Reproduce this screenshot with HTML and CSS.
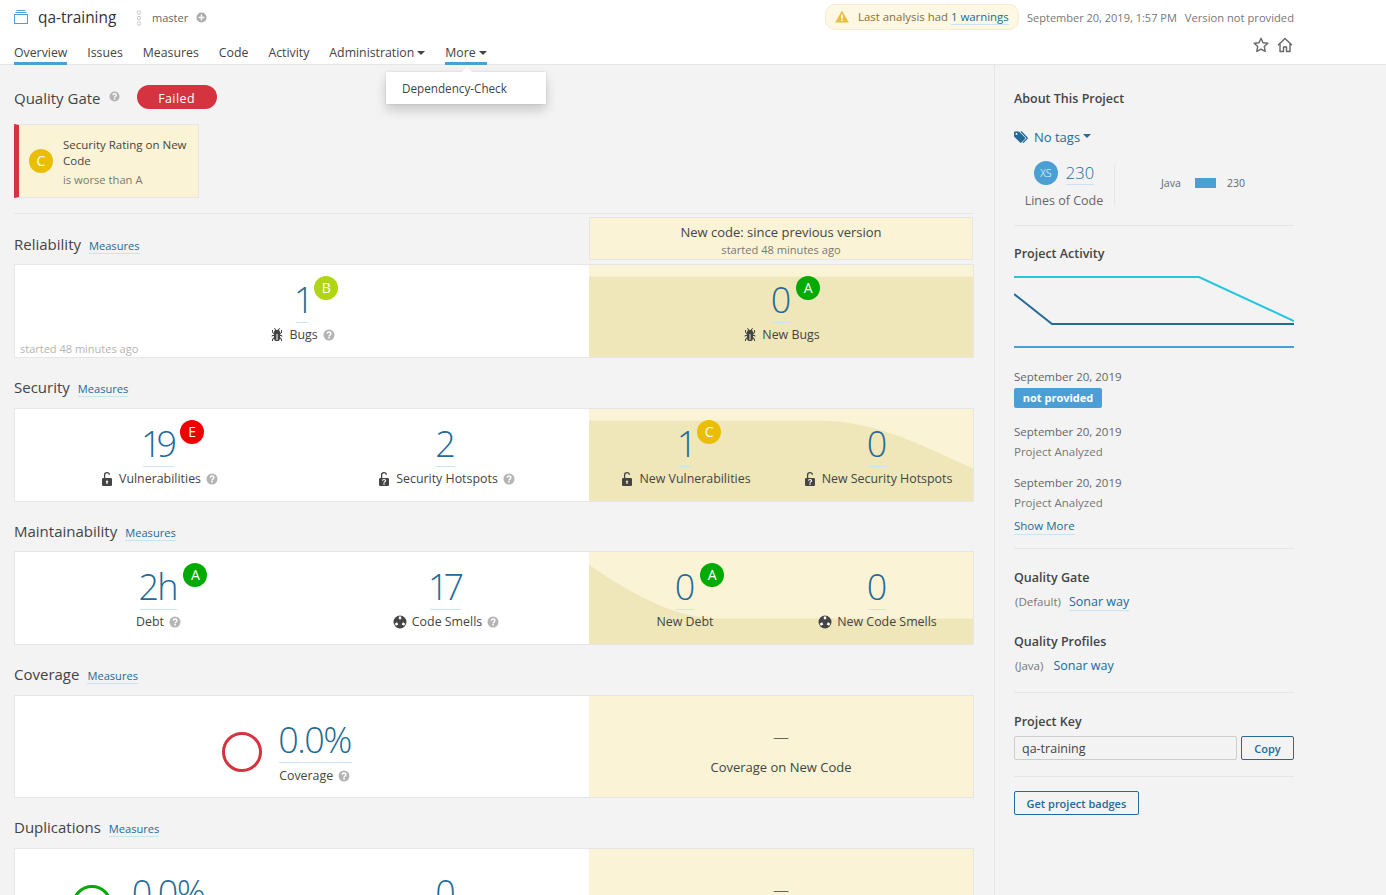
FILE: index.html
```html
<!DOCTYPE html>
<html lang="en">
<head>
<meta charset="utf-8">
<title>qa-training</title>
<link rel="stylesheet" href="styles.css">
</head>
<body>
<svg class="sprite" xmlns="http://www.w3.org/2000/svg">
  <symbol id="i-help" viewBox="0 0 12 12"><circle cx="6" cy="6" r="5.5" fill="#b4b4b4"/><path d="M4.2 4.7C4.3 3.6 5 3 6 3c1.1 0 1.9.7 1.9 1.6 0 1.5-1.9 1.4-1.9 2.8" fill="none" stroke="#fff" stroke-width="1.4"/><rect x="5.2" y="8" width="1.6" height="1.5" fill="#fff"/></symbol>
  <symbol id="i-bug" viewBox="0 0 16 16"><path fill="#444" fill-rule="evenodd" d="M11 9h1.300l.5.8.8-.5-.8-1.300H11v-.3l2-2.300V3h-1v2l-1 1.200V5c-.1-.8-.7-1.500-1.400-1.900L11 1.800l-.7-.7-1.800 1.800h-1L5.700 1.100 5 1.800l1.400 1.300C5.700 3.500 5.100 4.200 5 5v1.200L4 5V3H3v2.300l2 2.300V8H3.200l-.8 1.300.8.5.5-.8H5v1l-2 2.300V14h1v-1.300l1-1.200c0 1.100.9 2.500 2 2.500h2c1.100 0 2-1.400 2-2.500l1 1.200V14h1v-1.700L11 10V9zM7.500 7h1v6h-1V7z"/></symbol>
  <symbol id="i-lock" viewBox="0 0 16 16"><path fill="none" stroke="#444" stroke-width="1.300" d="M5.600 7V3.900C5.600 2.600 6.700 1.700 8 1.700s2.300.8 2.400 2"/><path fill="#444" fill-rule="evenodd" d="M4.300 7h7.400c.7 0 1.300.6 1.300 1.300v5.400c0 .7-.6 1.300-1.300 1.300H4.300C3.600 15 3 14.400 3 13.700V8.300C3 7.600 3.600 7 4.300 7zM8 9.400a1.200 1.200 0 0 0-.6 2.200V13h1.200v-1.400A1.200 1.200 0 0 0 8 9.400z"/></symbol>
  <symbol id="i-hotspot" viewBox="0 0 16 16"><path fill="none" stroke="#444" stroke-width="1.300" d="M5.600 7V3.900C5.600 2.600 6.700 1.700 8 1.700s2.300.8 2.400 2"/><path fill="#444" d="M4.300 7h7.400c.7 0 1.300.6 1.300 1.300v5.400c0 .7-.6 1.300-1.300 1.300H4.300C3.600 15 3 14.400 3 13.700V8.300C3 7.600 3.600 7 4.300 7z"/><path fill="none" stroke="#fff" stroke-width="1.200" d="M6.400 9.600C6.500 8.900 7.100 8.500 8 8.500c.9 0 1.600.5 1.600 1.200 0 1.100-1.600 1-1.600 2.100"/><rect x="7.300" y="12.400" width="1.400" height="1.300" fill="#fff"/></symbol>
  <symbol id="i-smell" viewBox="0 0 16 16"><circle cx="8" cy="8" r="6.500" fill="#444"/><path d="M8 5.300V2.600M10.300 9.400l2.400 1.400M5.700 9.400l-2.400 1.400" stroke="#fff" stroke-width="2.400" fill="none"/><circle cx="8" cy="8" r="1.300" fill="#444"/></symbol>
</svg>

<div class="page">
  <header class="topbar">
    <div class="topbar-row">
      <div class="project">
        <svg class="project-icon" viewBox="0 0 14 14"><path d="M2.500 .5h9M1.500 2.500h11" stroke="#4b9fd5" fill="none"/><rect x=".5" y="4.500" width="13" height="9" fill="none" stroke="#4b9fd5"/></svg>
        <span class="project-name">qa-training</span>
        <svg class="branch-icon" viewBox="0 0 8 16"><g fill="none" stroke="#c8c8c8" stroke-width="1"><circle cx="4" cy="2.500" r="1.700"/><circle cx="4" cy="8" r="1.700"/><circle cx="4" cy="13.500" r="1.700"/></g></svg>
        <span class="branch-name">master</span>
        <svg class="plus-icon" viewBox="0 0 12 12"><circle cx="6" cy="6" r="5.500" fill="#aaa"/><path d="M6 2.800v6.400M2.800 6h6.400" stroke="#fff" stroke-width="1.600"/></svg>
      </div>
      <div class="meta">
        <div class="warn-pill">
          <svg class="warn-icon" viewBox="0 0 14 13"><path d="M7 .5L13.800 12.500H.2z" fill="#eabe42"/><path d="M7 4.500v4M7 9.500v1.500" stroke="#fff" stroke-width="1.600"/></svg>
          <span class="warn-text">Last analysis had <a class="link">1 warnings</a></span>
        </div>
        <span class="meta-text">September 20, 2019, 1:57 PM</span>
        <span class="meta-text version-text">Version not provided</span>
      </div>
    </div>
    <div class="topbar-row nav-row">
      <nav class="nav">
        <a class="nav-item active">Overview</a>
        <a class="nav-item">Issues</a>
        <a class="nav-item">Measures</a>
        <a class="nav-item">Code</a>
        <a class="nav-item">Activity</a>
        <a class="nav-item">Administration<i class="caret"></i></a>
        <a class="nav-item active">More<i class="caret"></i></a>
      </nav>
      <div class="actions">
        <svg class="action-icon" viewBox="0 0 16 16"><path d="M8 1.300l2 4.400 4.800.6-3.500 3.300.9 4.800L8 12.100l-4.200 2.300.9-4.800L1.200 6.300 6 5.700z" fill="none" stroke="#666" stroke-width="1.400" stroke-linejoin="round"/></svg>
        <svg class="action-icon" viewBox="0 0 16 16"><path d="M1 8.300L8 1.500l7 6.800M3 7v7.500h3.500V10h3v4.500H13V7" fill="none" stroke="#666" stroke-width="1.400" stroke-linejoin="round"/></svg>
      </div>
    </div>
    <div class="menu"><span class="menu-item">Dependency-Check</span></div>
  </header>

  <div class="main">
    <div class="content">
      <div class="gate-row">
        <h2 class="title">Quality Gate</h2>
        <svg class="help help-gate"><use href="#i-help"/></svg>
        <span class="failed">Failed</span>
      </div>
      <div class="condition">
        <span class="rating r-c cond-rating">C</span>
        <div class="cond-text">
          <div>Security Rating on New Code</div>
          <div class="cond-sub">is worse than A</div>
        </div>
      </div>
      <div class="rule"></div>

      <div class="section-head first">
        <div class="head-title"><h3 class="title">Reliability</h3><a class="link small">Measures</a></div>
        <div class="new-code">
          <div>New code: since previous version</div>
          <div class="new-code-sub">started 48 minutes ago</div>
        </div>
      </div>
      <div class="card">
        <div class="pane">
          <div class="measure">
            <div class="value-wrap"><span class="value solo">1</span><span class="rating r-b over">B</span></div>
            <div class="label"><svg class="type"><use href="#i-bug"/></svg>Bugs<svg class="help"><use href="#i-help"/></svg></div>
          </div>
          <span class="started">started 48 minutes ago</span>
        </div>
        <div class="pane leak">
          <svg class="leak-bg" viewBox="0 0 384 94" preserveAspectRatio="none"><path d="M0 12H384V94H0z"/></svg>
          <div class="measure">
            <div class="value-wrap"><span class="value">0</span><span class="rating r-a over">A</span></div>
            <div class="label"><svg class="type"><use href="#i-bug"/></svg>New Bugs</div>
          </div>
        </div>
      </div>

      <div class="section-head">
        <div class="head-title"><h3 class="title">Security</h3><a class="link small">Measures</a></div>
      </div>
      <div class="card">
        <div class="pane">
          <div class="measure">
            <div class="value-wrap"><span class="value narrow">19</span><span class="rating r-e over">E</span></div>
            <div class="label"><svg class="type"><use href="#i-lock"/></svg>Vulnerabilities<svg class="help"><use href="#i-help"/></svg></div>
          </div>
          <div class="measure">
            <div class="value-wrap"><span class="value">2</span></div>
            <div class="label"><svg class="type"><use href="#i-hotspot"/></svg>Security Hotspots<svg class="help"><use href="#i-help"/></svg></div>
          </div>
        </div>
        <div class="pane leak">
          <svg class="leak-bg" viewBox="0 0 384 94" preserveAspectRatio="none"><path d="M0 12H230C280 12 320 30 384 61V94H0z"/></svg>
          <div class="measure">
            <div class="value-wrap"><span class="value solo">1</span><span class="rating r-c over">C</span></div>
            <div class="label"><svg class="type"><use href="#i-lock"/></svg>New Vulnerabilities</div>
          </div>
          <div class="measure">
            <div class="value-wrap"><span class="value">0</span></div>
            <div class="label"><svg class="type"><use href="#i-hotspot"/></svg>New Security Hotspots</div>
          </div>
        </div>
      </div>

      <div class="section-head">
        <div class="head-title"><h3 class="title">Maintainability</h3><a class="link small">Measures</a></div>
      </div>
      <div class="card">
        <div class="pane">
          <div class="measure">
            <div class="value-wrap"><span class="value">2h</span><span class="rating r-a over">A</span></div>
            <div class="label">Debt<svg class="help"><use href="#i-help"/></svg></div>
          </div>
          <div class="measure">
            <div class="value-wrap"><span class="value narrow">17</span></div>
            <div class="label"><svg class="type"><use href="#i-smell"/></svg>Code Smells<svg class="help"><use href="#i-help"/></svg></div>
          </div>
        </div>
        <div class="pane leak">
          <svg class="leak-bg" viewBox="0 0 384 94" preserveAspectRatio="none"><path d="M0 13C50 48 90 68 130 68H384V94H0z"/></svg>
          <div class="measure">
            <div class="value-wrap"><span class="value">0</span><span class="rating r-a over">A</span></div>
            <div class="label">New Debt</div>
          </div>
          <div class="measure">
            <div class="value-wrap"><span class="value">0</span></div>
            <div class="label"><svg class="type"><use href="#i-smell"/></svg>New Code Smells</div>
          </div>
        </div>
      </div>

      <div class="section-head">
        <div class="head-title"><h3 class="title">Coverage</h3><a class="link small">Measures</a></div>
      </div>
      <div class="card tall">
        <div class="pane">
          <div class="measure-wide">
            <svg class="donut"><circle cx="20" cy="20" r="18.500" fill="none" stroke="#d4333f" stroke-width="3"/></svg>
            <div class="wide-text">
              <span class="value">0.0%</span>
              <div class="label">Coverage<svg class="help"><use href="#i-help"/></svg></div>
            </div>
          </div>
        </div>
        <div class="pane leak">
          <div class="measure-empty">
            <div class="dash">—</div>
            <div class="label">Coverage on New Code</div>
          </div>
        </div>
      </div>

      <div class="section-head">
        <div class="head-title"><h3 class="title">Duplications</h3><a class="link small">Measures</a></div>
      </div>
      <div class="card tall">
        <div class="pane">
          <div class="measure-wide half">
            <svg class="donut"><circle cx="20" cy="20" r="18.500" fill="none" stroke="#00aa00" stroke-width="3"/></svg>
            <div class="wide-text">
              <span class="value">0.0%</span>
            </div>
          </div>
          <div class="measure low">
            <div class="value-wrap"><span class="value">0</span></div>
          </div>
        </div>
        <div class="pane leak">
          <div class="measure-empty">
            <div class="dash">—</div>
          </div>
        </div>
      </div>
    </div>

    <aside class="side">
      <section class="side-block about">
        <h4 class="side-title">About This Project</h4>
        <div class="tags">
          <svg class="tag-icon" viewBox="0 0 15 12"><path d="M0 1v4.500L6 11.500a1 1 0 0 0 1.400 0L11 8a1 1 0 0 0 0-1.400L5 .5H.6zM2.500 2a1 1 0 1 1 0 2 1 1 0 0 1 0-2z" fill="#236a97" fill-rule="evenodd"/><path d="M7 .5l5.800 6a1 1 0 0 1 0 1.400L9 11.700" fill="none" stroke="#236a97" stroke-width="1.300"/></svg>
          <span>No tags</span><i class="caret blue"></i>
        </div>
        <div class="size-row">
          <div class="size">
            <div class="size-top"><span class="size-badge">XS</span><span class="size-num">230</span></div>
            <div class="size-label">Lines of Code</div>
          </div>
          <div class="lang">
            <span class="lang-name">Java</span><span class="lang-bar"></span><span class="lang-num">230</span>
          </div>
        </div>
      </section>

      <section class="side-block activity">
        <h4 class="side-title">Project Activity</h4>
        <svg class="spark" viewBox="0 0 280 80" preserveAspectRatio="none">
          <path d="M0 7H185L280 51" stroke="#24c6e0"/>
          <path d="M0 24L38 54H280" stroke="#236a97"/>
          <path d="M0 77H280" stroke="#4b9fd5"/>
        </svg>
        <div class="event first-event">
          <div class="event-date">September 20, 2019</div>
          <span class="version">not provided</span>
        </div>
        <div class="event">
          <div class="event-date">September 20, 2019</div>
          <div class="event-note">Project Analyzed</div>
        </div>
        <div class="event">
          <div class="event-date">September 20, 2019</div>
          <div class="event-note">Project Analyzed</div>
        </div>
        <a class="link show-more">Show More</a>
      </section>

      <section class="side-block profiles">
        <h4 class="side-title">Quality Gate</h4>
        <div class="profile-row"><span class="muted">(Default)</span><a class="link">Sonar way</a></div>
        <h4 class="side-title second">Quality Profiles</h4>
        <div class="profile-row"><span class="muted java">(Java)</span><a class="plain-link">Sonar way</a></div>
      </section>

      <section class="side-block key">
        <h4 class="side-title">Project Key</h4>
        <div class="key-row">
          <div class="key-input">qa-training</div>
          <span class="btn copy">Copy</span>
        </div>
      </section>

      <section class="badges">
        <span class="btn">Get project badges</span>
      </section>
    </aside>
  </div>
</div>
</body>
</html>
```

FILE: styles.css
```css
* { box-sizing: border-box; }
html, body { margin: 0; padding: 0; height: 100%; overflow: hidden; }
body {
  background: #f3f3f3;
  color: #444;
  font-family: "Open Sans", "Noto Sans", sans-serif;
  font-size: 12px;
  line-height: 16px;
}
.sprite { display: none; }
.page { height: 895px; overflow: hidden; }
a { text-decoration: none; }

.topbar {
  position: relative;
  height: 65px;
  background: #fff;
  border-bottom: 1px solid #e6e6e6;
  padding: 0 92px 0 14px;
}
.topbar-row { display: flex; justify-content: space-between; align-items: center; }
.topbar-row:first-child { height: 36px; }
.project { display: flex; align-items: center; height: 36px; }
.project-icon { width: 14px; height: 14px; margin-right: 10px; margin-top: -3px; }
.project-name { font-size: 15.400px; color: #333; width: 78px; white-space: nowrap; padding-top: 1px; margin-top: -2px; }
.branch-icon { width: 8px; height: 16px; margin: -1px 9px 0 19px; }
.branch-name { font-size: 11px; color: #666; width: 37px; margin-top: -1px; }
.plus-icon { width: 11px; height: 11px; margin: -2px 0 0 7px; }
.meta { display: flex; align-items: center; height: 36px; margin-top: -3px; font-size: 11px; }
.warn-pill {
  display: flex; align-items: center; height: 26px; width: 194px;
  padding: 0 8px 0 9px; margin-right: 8px;
  background: #fcf8e3; border: 1px solid #faebcc; border-radius: 10px;
  color: #8a6d3b; white-space: nowrap; font-size: 11.400px;
}
.warn-icon { width: 14px; height: 13px; margin-right: 9px; flex: none; }
.warn-text { padding-top: 1px; }
.meta-text { color: #777; margin-right: 8px; white-space: nowrap; padding-top: 2px; }
.version-text { margin-right: 0; font-size: 11.200px; }
.link { color: #236a97; border-bottom: 1px solid #cae3f2; }
.plain-link { color: #236a97; }

.nav-row { height: 29px; align-items: flex-start; }
.nav { display: flex; gap: 20px; font-size: 12.300px; }
.nav-item { display: block; height: 29px; line-height: 33px; color: #444; white-space: nowrap; }
.nav-item.active { border-bottom: 3px solid #4b9fd5; line-height: 33px; }
.caret {
  display: inline-block; vertical-align: middle; margin: -2px 0 0 3px;
  border: 4px solid transparent; border-top-color: #444; border-bottom: 0;
}
.caret.blue { border-top-color: #236a97; }
.actions { display: flex; gap: 8px; margin: 1px 1px 0 0; }
.action-icon { width: 16px; height: 16px; }

.menu {
  position: absolute; left: 386px; top: 72px; width: 160px; height: 32px;
  background: #fff; box-shadow: 0 6px 12px rgba(0,0,0,.175), 0 0 2px rgba(0,0,0,.12);
  padding: 8px 16px 0; font-size: 11.700px; z-index: 5; white-space: nowrap;
}
.menu::before {
  content: ""; position: absolute; left: 76px; top: -5px;
  border: 5px solid transparent; border-bottom-color: #fff; border-top: 0;
}

.main { display: flex; height: 830px; }
.content { width: 960px; margin-left: 14px; margin-right: 20px; flex: none; padding-top: 20px; }
.side { flex: 1; border-left: 1px solid #e6e6e6; padding: 0 92px 0 19px; }

.gate-row { display: flex; align-items: center; height: 24px; }
.gate-row .title { padding-top: 2px; }
.title { margin: 0; font-weight: 400; font-size: 15px; color: #444; white-space: nowrap; }
.help { width: 12px; height: 12px; flex: none; }
.help-gate { width: 11px; height: 11px; margin: -2px 0 0 8px; }
.failed {
  width: 80px; height: 24px; margin-left: 17px; border-radius: 12px;
  background: #d4333f; color: #fff; text-align: center; line-height: 27px;
  font-size: 12.500px; letter-spacing: .4px;
}
.condition {
  display: flex; align-items: center; width: 185px; height: 74px; margin-top: 15px;
  background: #fbf3d5; border: 1px solid #e6e6e6; border-left: 5px solid #d4333f;
  padding-left: 10px; font-size: 11.500px; line-height: 16px;
}
.cond-rating { flex: none; margin-right: 10px; }
.cond-text { width: 126px; padding-top: 2px; }
.cond-sub { color: #777; margin-top: 3px; font-size: 11.200px; }
.rule { height: 1px; background: #e6e6e6; margin-top: 15px; }

.section-head { display: flex; align-items: flex-end; height: 29.670px; margin-top: 20px; }
.section-head.first { height: 47px; margin-top: 3px; }
.head-title { display: flex; align-items: baseline; width: 575px; height: 30px; padding-top: 1.500px; }
.head-title .title { margin-right: 8px; }
.small { font-size: 11.100px; line-height: 15px; }
.new-code {
  width: 384px; height: 43px; margin-bottom: 4px; text-align: center;
  background: #fbf3d5; border: 1px solid #e6e6e6; padding-top: 5px;
  font-size: 13px; line-height: 18px;
}
.new-code-sub { color: #777; font-size: 11.100px; line-height: 16px; margin-top: 1px; }

.card { display: flex; height: 94px; background: #fff; border: 1px solid #e6e6e6; }
.card.tall { height: 103px; }
.pane { position: relative; display: flex; width: 574px; flex: none; }
.pane.leak { flex: 1; width: auto; background: #fbf3d5; }
.leak-bg { position: absolute; left: 0; top: 0; width: 100%; height: 100%; fill: #efe7b9; }
.measure { position: relative; flex: 1 1 0; display: flex; flex-direction: column; align-items: center; padding-top: 13px; }
.measure.low { padding-top: 22px; }
.value-wrap { position: relative; }
.value {
  display: inline-block; font-weight: 300; font-size: 36px; line-height: 44px; letter-spacing: -2px;
  color: #236a97; border-bottom: 1px solid #cae3f2; white-space: nowrap;
  text-indent: -1px; padding-right: 1px;
}
.value.narrow { letter-spacing: -5px; text-indent: -2px; padding-right: 2px; }
.value.solo { letter-spacing: -8px; text-indent: -2px; padding-right: 2px; }
.rating {
  display: inline-block; width: 24px; height: 24px; border-radius: 50%;
  color: #fff; text-align: center; line-height: 24px; font-size: 14px;
}
.over { position: absolute; left: 100%; top: -2px; margin-left: 6px; }
.r-a { background: #00aa00; }
.r-b { background: #b0d513; }
.r-c { background: #eabe06; }
.r-e { background: #ee0000; }
.label { position: relative; display: flex; align-items: center; height: 16px; margin-top: 4px; white-space: nowrap; font-size: 12.400px; }
.type { width: 16px; height: 16px; margin-right: 4px; flex: none; }
.label .help { margin-left: 5px; }
.started { position: absolute; left: 5px; bottom: 0; color: #b4b4b4; font-size: 11px; }

.measure-wide { flex: 1; display: flex; justify-content: center; align-items: flex-start; gap: 17px; padding-right: 30px; }
.measure-wide.half { flex: none; width: 287px; gap: 21px; padding-right: 40px; }
.donut { width: 40px; height: 40px; flex: none; margin-top: 36px; }
.wide-text { display: flex; flex-direction: column; padding-top: 22px; }
.measure-wide .value { align-self: flex-start; letter-spacing: -1.500px; }
.measure-wide .label { margin-top: 5px; }
.measure-empty { flex: 1; text-align: center; padding-top: 27px; }
.measure-empty .label { justify-content: center; margin-top: 8px; font-size: 13px; }
.dash { font-size: 16px; line-height: 28px; font-weight: 300; color: #444; }

.side-block { border-bottom: 1px solid #e6e6e6; }
.side-title { margin: 0; font-weight: 600; font-size: 12.500px; line-height: 18px; color: #444; }
.about { height: 161px; padding-top: 24px; }
.about .side-title { padding-top: 1px; }
.tags { display: flex; align-items: center; margin-top: 20px; color: #236a97; font-size: 13px; line-height: 18px; }
.tag-icon { width: 15px; height: 12px; margin-right: 5px; }
.size-row { display: flex; margin-top: 15px; }
.size { width: 101px; height: 40px; border-right: 1px solid #e6e6e6; margin-top: 4px; }
.size-top { display: flex; align-items: center; justify-content: center; margin-top: -4px; height: 24px; width: 100px; }
.size-badge {
  width: 24px; height: 24px; border-radius: 50%; background: #4b9fd5; color: #fff;
  text-align: center; line-height: 24px; font-size: 10.500px; font-weight: 300; margin-right: 8px;
}
.size-num { font-size: 16.500px; font-weight: 300; color: #236a97; line-height: 23px; border-bottom: 1px solid #cae3f2; }
.size-label { text-align: center; color: #666; margin-top: 8px; width: 100px; font-size: 12.500px; white-space: nowrap; }
.lang { display: flex; align-items: center; height: 20px; margin: 12px 0 0 46px; font-size: 10.500px; color: #666; }
.lang-name { width: 34px; }
.lang-bar { width: 21px; height: 10px; background: #4b9fd5; margin-right: 11px; }
.activity { height: 323px; padding-top: 19px; }
.spark { display: block; width: 280px; height: 80px; margin-top: 7px; fill: none; }
.spark path { stroke-width: 2; }
.event { margin-top: 13px; }
.first-event { margin-top: 18px; }
.first-event + .event { margin-top: 15px; }
.event-date { color: #666; font-size: 11.500px; line-height: 18px; }
.event-note { color: #777; font-size: 11.500px; line-height: 18px; margin-top: 2px; }
.version {
  display: block; width: 88px; height: 20px; margin-top: 2px; background: #4b9fd5; color: #fff;
  border-radius: 2px; text-align: center; font-weight: 700; font-size: 11px; line-height: 20px;
}
.show-more { display: inline-block; margin-top: 6px; font-size: 11.500px; line-height: 16px; }
.profiles { height: 144px; padding-top: 20px; }
.profile-row { display: flex; align-items: baseline; gap: 8px; margin-top: 7px; font-size: 12.500px; }
.muted { color: #777; font-size: 11.500px; margin-left: 1px; }
.muted.java { margin-right: 2px; }
.second { margin-top: 22px; }
.key { height: 84px; padding-top: 20px; }
.key-row { display: flex; justify-content: space-between; margin-top: 5px; }
.key-input {
  width: 223px; height: 24px; background: #f3f3f3; border: 1px solid #cdcdcd; border-radius: 2px;
  padding-left: 7px; font-size: 12.500px; line-height: 23px; color: #444;
}
.btn {
  display: inline-block; height: 24px; padding: 0 11.500px; background: transparent;
  border: 1px solid #236a97; border-radius: 2px; color: #236a97; font-weight: 600;
  font-size: 11px; line-height: 23px; white-space: nowrap;
}
.copy { width: 53px; text-align: center; padding: 0; }
.badges { padding-top: 14px; }
```
